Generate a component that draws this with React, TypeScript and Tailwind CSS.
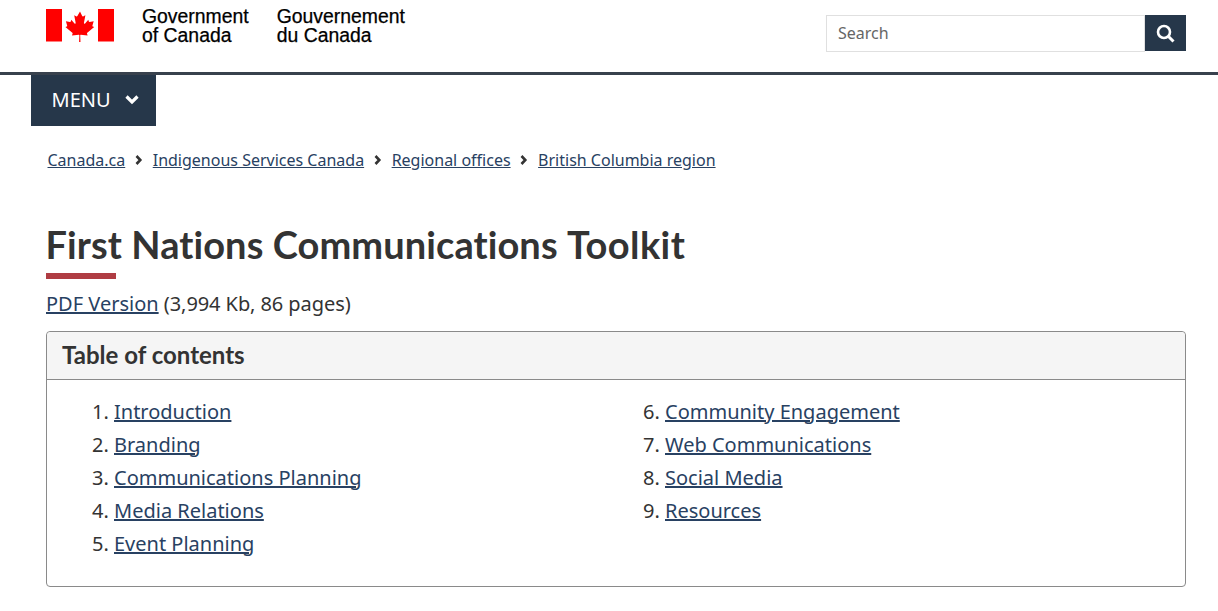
import React from 'react';

const leftItems = ['Introduction', 'Branding', 'Communications Planning', 'Media Relations', 'Event Planning'];
const rightItems = ['Community Engagement', 'Web Communications', 'Social Media', 'Resources'];
const crumbs = ['Canada.ca', 'Indigenous Services Canada', 'Regional offices', 'British Columbia region'];

const Flag = () => (
  <svg width="68" height="32.500" viewBox="0 0 68 33" preserveAspectRatio="none" className="block">
    <rect x="0" y="0" width="16" height="33" fill="#ff0000" />
    <rect x="52" y="0" width="16" height="33" fill="#ff0000" />
    <path
      fill="#ff0000"
      d="M34 2.5l-2.6 4.6c-.3.5-.8.5-1.300.2l-1.900-1 1.400 7.500c.3 1.400-.6 1.400-1.100.8l-3.200-3.600-.5 1.800c-.1.300-.4.500-.8.500l-4.100-.9 1.100 3.900c.2.800.4 1.200-.2 1.400l-1.400.7 6.900 5.600c.3.200.4.600.3 1l-.6 2 6.900-.8c.2 0 .5.200.5.500l-.3 7h1.400l-.3-7c0-.3.300-.5.500-.5l6.900.8-.6-2c-.1-.4 0-.8.300-1l6.900-5.600-1.400-.7c-.6-.2-.4-.6-.2-1.400l1.100-3.900-4.100.9c-.4 0-.7-.2-.8-.5l-.5-1.800-3.200 3.600c-.5.600-1.400.6-1.100-.8l1.400-7.500-1.900 1c-.5.300-1 .3-1.300-.2z"
    />
  </svg>
);

const Chevron = () => (
  <svg width="8" height="10" viewBox="0 0 8 10" className="mx-[9.750px] shrink-0">
    <path d="M1.500 1l3.800 4-3.800 4" fill="none" stroke="#333333" strokeWidth="2.600" />
  </svg>
);

const LinkList = ({ items, start }: { items: string[]; start: number }) => (
  <ol className="flex flex-col" start={start}>
    {items.map((item, i) => (
      <li key={item} className="flex h-[33px] items-center">
        <span className="w-[22px] text-[#333333]">{start + i}.</span>
        <a href="#" className="text-[#284162] underline">{item}</a>
      </li>
    ))}
  </ol>
);

export default function App() {
  return (
    <div className="h-[611px] overflow-hidden bg-white font-['Noto_Sans',sans-serif] text-[#333333]">
      <header className="flex h-[72px] justify-between pr-[32px] pl-[46px]">
        <div className="flex items-start pt-[7px]">
          <div className="pt-[2px]"><Flag /></div>
          <div className="ml-[28px] font-['Liberation_Sans',sans-serif] text-[19.400px] leading-[19px] text-black [-webkit-text-stroke:0.25px_black]">
            Government<br />of Canada
          </div>
          <div className="ml-[28px] font-['Liberation_Sans',sans-serif] text-[19.400px] leading-[19px] text-black [-webkit-text-stroke:0.25px_black]">
            Gouvernement<br />du Canada
          </div>
        </div>
        <div className="flex items-start pt-[15px]">
          <div className="flex h-[37px] w-[319px] items-center border border-[#e0e0e0] pb-[2px] pl-[11px] text-[16px] text-[#666666]">Search</div>
          <button className="flex h-[36px] w-[41px] items-center justify-center bg-[#26374a]">
            <svg width="19" height="19" viewBox="0 0 19 19">
              <circle cx="8" cy="8" r="6" fill="none" stroke="#ffffff" strokeWidth="2.600" />
              <path d="M12.500 12.500l5 5" stroke="#ffffff" strokeWidth="3" />
            </svg>
          </button>
        </div>
      </header>
      <div className="h-[3px] bg-[#38414d]" />
      <div className="pl-[31px]">
        <button className="flex h-[51px] w-[125px] items-center bg-[#26374a] pb-[2px] pl-[20.500px] text-[20px] text-white">
          MENU
          <svg width="14" height="11" viewBox="0 0 14 11" className="ml-[14px]">
            <path d="M1.500 2.500l5.500 5.500 5.500-5.500" fill="none" stroke="#ffffff" strokeWidth="3.200" />
          </svg>
        </button>
      </div>
      <main className="px-[46px]">
        <nav className="mt-[22px] flex h-[24px] items-center pl-[1.500px] text-[16px]">
          {crumbs.map((c, i) => (
            <React.Fragment key={c}>
              {i > 0 && <Chevron />}
              <a href="#" className="text-[#284162] underline">{c}</a>
            </React.Fragment>
          ))}
        </nav>
        <h1 className="mt-[49px] -ml-[0.500px] font-['Lato',sans-serif] text-[38px] leading-[46px] font-bold tracking-[0.08px] text-[#333333] [font-variant-ligatures:none]">First Nations Communications <span className="tracking-[0.4px]">Toolkit</span></h1>
        <div className="mt-[6px] h-[6px] w-[70px] bg-[#af3c43]" />
        <p className="mt-[11px] text-[20px] leading-[28px]">
          <a href="#" className="text-[#284162] underline">PDF Version</a> <span className="tracking-[-0.08px]">(3,994 Kb, 86 pages)</span>
        </p>
        <section className="mt-[13px] h-[256px] w-[1140px] rounded-[4px] border border-[#8a8a8a]">
          <h2 className="flex h-[48px] items-center rounded-t-[4px] border-b border-[#8a8a8a] bg-[#f5f5f5] pb-[2px] pl-[15px] font-['Lato',sans-serif] text-[24px] font-bold text-[#333333] [font-variant-ligatures:none]">Table of contents</h2>
          <div className="flex pt-[15px] pl-[45px] text-[20px]">
            <div className="w-[551px]"><LinkList items={leftItems} start={1} /></div>
            <div><LinkList items={rightItems} start={6} /></div>
          </div>
        </section>
      </main>
    </div>
  );
}
